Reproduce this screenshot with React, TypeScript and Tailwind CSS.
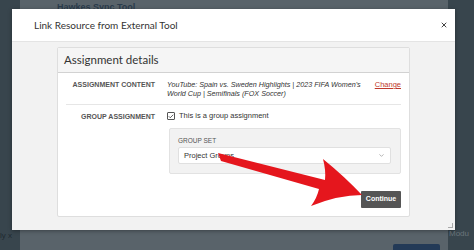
import { X, ChevronDown, Check } from "lucide-react";

function Arrow() {
  return (
    <svg
      className="absolute z-20 left-0 top-0 pointer-events-none"
      width="474"
      height="250"
      viewBox="0 0 474 250"
    >
      <path
        d="M218 153 L221 161 L319 189 Q317 198 311 206 Q338 195 362 195 Q344 176 323 159 Q326 170 325 180 Z"
        fill="#e5161d"
      />
    </svg>
  );
}

function Modal() {
  return (
    <div className="absolute z-10 left-[12px] top-[9px] w-[443px] h-[221px] bg-white flex flex-col shadow-[0_1px_4px_rgba(0,0,0,0.35)]">
      <div className="h-[32px] shrink-0 flex items-center justify-between pl-[22px] pr-[7px]">
        <span className="font-['Lato',sans-serif] text-[10px] text-[#333]">Link Resource from External Tool</span>
        <X className="w-[8px] h-[8px] text-[#444]" strokeWidth={3} />
      </div>
      <div className="flex-1 bg-[#f2f2f2] border-t border-[#e4e4e4] px-[45px] pt-[5px] pb-[13px] flex">
        <div className="flex-1 flex flex-col bg-white border border-[#dedede] rounded-[2px]">
          <div className="h-[25px] shrink-0 bg-[#f5f5f5] border-b border-[#d2d2d2] flex items-center pl-[6px]">
            <span className="font-['Lato',sans-serif] text-[11.5px] text-[#333]">Assignment details</span>
          </div>
          <div className="flex-1 flex flex-col px-[8px]">
            <div className="flex items-start gap-[12px] pt-[7px] pb-[6px] border-b border-[#e6e6e6]">
              <div className="w-[89px] shrink-0 text-right text-[7px] font-bold text-[#555] leading-[9px]">
                ASSIGNMENT CONTENT
              </div>
              <div className="flex-1 flex items-start gap-[4px]">
                <div className="flex-1 text-[7.2px] italic text-[#333] leading-[9px]">
                  YouTube: Spain vs. Sweden Highlights | 2023 FIFA Women's World Cup | Semifinals (FOX Soccer)
                </div>
                <a className="shrink-0 text-[7.5px] text-[#c0392b] underline leading-[9px]">Change</a>
              </div>
            </div>
            <div className="flex items-start gap-[12px] pt-[6px]">
              <div className="w-[89px] shrink-0 text-right text-[7px] font-bold text-[#555] leading-[9px] pt-[1px]">
                GROUP ASSIGNMENT
              </div>
              <div className="flex-1 flex flex-col">
                <div className="flex items-center gap-[4px] h-[10px]">
                  <span className="w-[8px] h-[8px] border border-[#555] rounded-[1px] flex items-center justify-center bg-white">
                    <Check className="w-[7px] h-[7px] text-[#333]" strokeWidth={3} />
                  </span>
                  <span className="text-[7.5px] text-[#333]">This is a group assignment</span>
                </div>
                <div className="mt-[7px] ml-[2px] bg-[#f2f2f2] border border-[#e2e2e2] rounded-[2px] pl-[8px] pr-[9px] pt-[8px] pb-[9px]">
                  <div className="text-[6.5px] text-[#555] leading-[8px] mb-[2px]">GROUP SET</div>
                  <div className="h-[17px] bg-white border border-[#e0e0e0] rounded-[2px] flex items-center justify-between pl-[5px] pr-[5px]">
                    <span className="text-[7.5px] text-[#333]">Project Groups</span>
                    <ChevronDown className="w-[7px] h-[7px] text-[#999]" strokeWidth={2.5} />
                  </div>
                </div>
              </div>
            </div>
            <div className="mt-auto mb-[8px] flex justify-end">
              <button className="h-[17px] w-[40px] bg-[#555] text-white text-[7px] font-bold rounded-[1px]">Continue</button>
            </div>
          </div>
        </div>
      </div>
      <div className="absolute right-[2px] bottom-[2px] w-[5px] h-[5px] border-r border-b border-[#aaa]" />
    </div>
  );
}

export default function App() {
  return (
    <div className="relative w-[474px] h-[250px] overflow-hidden flex font-['Liberation_Sans',Arial,sans-serif]">
      <div className="w-[20px] bg-[#38454d] flex flex-col justify-end pb-[10px]">
        <span className="text-[8px] text-[#1f2a31] leading-none">ly x</span>
      </div>
      <div className="flex-1 bg-[#59636a] flex flex-col justify-between">
        <div className="pl-[37px] pt-[3px] text-[9px] font-bold text-[#2b3c4c] leading-none">
          Hawkes Sync Tool
        </div>
        <div className="flex justify-end pr-[8px]">
          <div className="w-[47px] h-[6px] bg-[#233a57] rounded-t-[2px]" />
        </div>
      </div>
      <div className="w-[26px] bg-[#38454d] flex flex-col justify-end pb-[12px] pl-[1px]">
        <span className="text-[8px] text-[#6b757c] leading-none">Modu</span>
      </div>
      <Modal />
      <Arrow />
    </div>
  );
}
